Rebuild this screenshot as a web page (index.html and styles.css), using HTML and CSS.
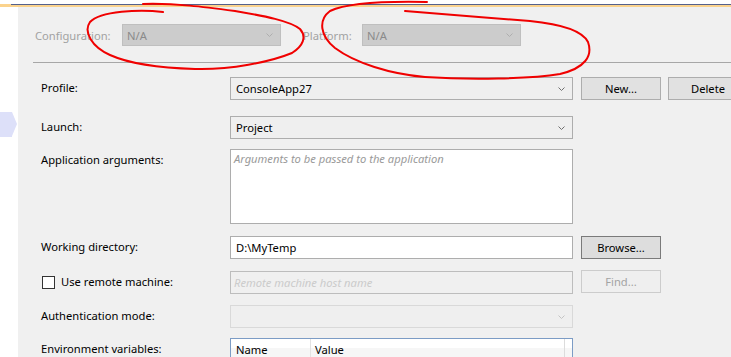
FILE: index.html
```html
<!DOCTYPE html>
<html lang="en">
<head>
    <meta charset="UTF-8">
    <title>Debug</title>
    <link rel="stylesheet" href="styles.css">
</head>
<body>
<div class="top-space"></div>
<div class="accent"><div class="accent-line"></div></div>

<div class="main">
    <div class="gutter">
        <div class="marker"></div>
    </div>

    <div class="panel">
        <div class="config-bar">
            <span class="cfg-label cfg-label-conf">Configuration:</span>
            <div class="combo combo-off">
                <span>N/A</span>
                <svg class="chev" width="7" height="4" viewBox="0 0 7 4"><path d="M0.5 0.5 L3.5 3.5 L6.5 0.5" fill="none" stroke="#aeaeae"/></svg>
            </div>
            <span class="cfg-label cfg-label-plat">Platform:</span>
            <div class="combo combo-off">
                <span>N/A</span>
                <svg class="chev" width="7" height="4" viewBox="0 0 7 4"><path d="M0.5 0.5 L3.5 3.5 L6.5 0.5" fill="none" stroke="#aeaeae"/></svg>
            </div>
        </div>

        <div class="separator"></div>

        <div class="form">
            <div class="row row-profile">
                <label class="label">Profile:</label>
                <div class="combo field">
                    <span>ConsoleApp27</span>
                    <svg class="chev" width="7" height="4" viewBox="0 0 7 4"><path d="M0.5 0.5 L3.5 3.5 L6.5 0.5" fill="none" stroke="#707070"/></svg>
                </div>
                <button class="btn">New...</button>
                <button class="btn btn-last">Delete</button>
            </div>

            <div class="row row-launch">
                <label class="label">Launch:</label>
                <div class="combo field">
                    <span>Project</span>
                    <svg class="chev" width="7" height="4" viewBox="0 0 7 4"><path d="M0.5 0.5 L3.5 3.5 L6.5 0.5" fill="none" stroke="#707070"/></svg>
                </div>
            </div>

            <div class="row row-args">
                <label class="label">Application arguments:</label>
                <div class="textarea field">
                    <span class="placeholder">Arguments to be passed to the application</span>
                </div>
            </div>

            <div class="row row-dir">
                <label class="label">Working directory:</label>
                <div class="input field">D:\MyTemp</div>
                <button class="btn btn-default">Browse...</button>
            </div>

            <div class="row row-remote">
                <label class="label label-check"><span class="checkbox"></span>Use remote machine:</label>
                <div class="input input-off field">
                    <span class="placeholder placeholder-off">Remote machine host name</span>
                </div>
                <button class="btn btn-off">Find...</button>
            </div>

            <div class="row row-auth">
                <label class="label">Authentication mode:</label>
                <div class="combo combo-dim field">
                    <span></span>
                    <svg class="chev" width="7" height="4" viewBox="0 0 7 4"><path d="M0.5 0.5 L3.5 3.5 L6.5 0.5" fill="none" stroke="#c4c4c4"/></svg>
                </div>
            </div>

            <div class="row row-env">
                <label class="label">Environment variables:</label>
                <div class="grid field">
                    <div class="grid-head">
                        <span class="col-name">Name</span>
                        <span class="col-value">Value</span>
                        <span class="col-end"></span>
                    </div>
                </div>
            </div>
        </div>
    </div>
</div>

<!-- red marks drawn on top of the screenshot -->
<svg class="scribble" width="731" height="357" viewBox="0 0 731 357">
    <path d="M163 12 C140 9 100 11 90 22 C83 32 92 47 110 55 C130 64 160 68 195 69 C230 70 270 62 292 53 C303 46 307 37 300 29 C290 21 265 16 235 11 C205 7 175 3 143 4"
          fill="none" stroke="#f00000" stroke-width="2" stroke-linecap="round"/>
    <path d="M405 11 C440 14 490 18 530 21 C560 24 582 30 588 42 C593 56 585 68 560 74 C530 79 470 80 425 77 C390 74 355 63 335 48 C320 36 318 20 330 11 C345 4 380 1 427 2"
          fill="none" stroke="#f00000" stroke-width="2" stroke-linecap="round"/>
</svg>
</body>
</html>
```

FILE: styles.css
```css
*{
    padding: 0;
    margin: 0;
    box-sizing: border-box;
}

html, body{
    background: #ffffff;
    width: 731px;
    height: 357px;
    overflow: hidden;
}

body{
    position: relative;
    font-family: "Noto Sans", "Open Sans", sans-serif;
    font-size: 11.2px;
    color: #000;
}

/* strip at the very top */
.top-space{
    height: 4px;
}

.accent{
    height: 3px;
    background: #fbd38d;
}

.accent-line{
    height: 1px;
    margin-left: 11px;
    background: #54618c;
}

.main{
    display: flex;
    height: 350px;
    overflow: hidden;
}

.gutter{
    width: 18px;
    flex-shrink: 0;
    padding-top: 105px;
}

.marker{
    position: relative;
    width: 12px;
    height: 25px;
    background: #dde0f9;
}

.marker::after{
    content: "";
    position: absolute;
    left: 12px;
    top: 0;
    border-left: 5px solid #dde0f9;
    border-top: 12.5px solid transparent;
    border-bottom: 12.5px solid transparent;
}

.panel{
    flex: 1;
    min-width: 0;
    background: #f0f0f0;
}

/* configuration / platform */
.config-bar{
    display: flex;
    align-items: center;
    padding: 17px 0 0 17px;
}

.cfg-label{
    color: #a2a2a2;
    flex-shrink: 0;
}

.cfg-label-conf{
    width: 87px;
}

.cfg-label-plat{
    width: 59px;
    margin-left: 22px;
}

.combo{
    display: flex;
    align-items: center;
    justify-content: space-between;
    height: 23px;
    padding: 0 7px 0 5px;
    border: 1px solid #adadad;
    background: #efefef;
}

.combo-off{
    width: 159px;
    height: 22px;
    flex-shrink: 0;
    padding-left: 4px;
    background: #cccccc;
    border-color: #bfbfbf;
    color: #8a8a8a;
}

.combo-dim{
    border-color: #d9d9d9;
}

.separator{
    height: 1px;
    margin: 16px 0 0 15px;
    background: #a7a7a7;
}

/* form rows */
.form{
    padding-left: 23px;
}

.row{
    display: flex;
    align-items: flex-start;
}

.row-profile{ margin-top: 14px; }
.row-launch{ margin-top: 16px; }
.row-args{ margin-top: 10px; }
.row-dir{ margin-top: 12px; }
.row-remote{ margin-top: 12px; }
.row-auth{ margin-top: 11px; }
.row-env{ margin-top: 10px; }

.label{
    width: 189px;
    line-height: 22px;
    flex-shrink: 0;
}

.label-check{
    display: flex;
    align-items: center;
}

.checkbox{
    width: 13px;
    height: 13px;
    margin: 0 6px 0 1px;
    border: 1px solid #333333;
    background: #ffffff;
}

.field{
    width: 343px;
    flex-shrink: 0;
}

.textarea{
    height: 75px;
    padding: 1px 3px;
    border: 1px solid #adadad;
    background: #ffffff;
}

.input{
    height: 23px;
    line-height: 21px;
    padding: 0 5px;
    border: 1px solid #adadad;
    background: #ffffff;
}

.input-off{
    padding: 0 3px;
    background: #f0f0f0;
    border-color: #bdbdbd;
}

.placeholder{
    font-style: italic;
    color: #9a9a9a;
}

.placeholder-off{
    color: #cbcbcb;
}

.btn{
    width: 80px;
    height: 23px;
    margin-left: 8px;
    flex-shrink: 0;
    font-family: inherit;
    font-size: 11.2px;
    color: #000;
    background: #e1e1e1;
    border: 1px solid #adadad;
}

.btn-last{
    margin-left: 7px;
}

.btn-default{
    border-color: #7a7a7a;
    background: #dddddd;
}

.btn-off{
    margin-top: -1px;
    background: #efefef;
    border-color: #cccccc;
    color: #a3a3a3;
}

/* environment variables grid */
.grid{
    height: 40px;
    border: 1px solid #7c9cc5;
    border-bottom: none;
    background: #ffffff;
}

.grid-head{
    display: flex;
    height: 22px;
    line-height: 22px;
    background: linear-gradient(#ffffff 40%, #f6f6f6 41%);
}

.col-name{
    width: 80px;
    padding-left: 5px;
    border-right: 1px solid #e3e3e3;
}

.col-value{
    width: 254px;
    padding-left: 4px;
    border-right: 1px solid #dcdcdc;
}

/* red marks over the page */
.scribble{
    position: absolute;
    left: 0;
    top: 0;
    pointer-events: none;
}
```
